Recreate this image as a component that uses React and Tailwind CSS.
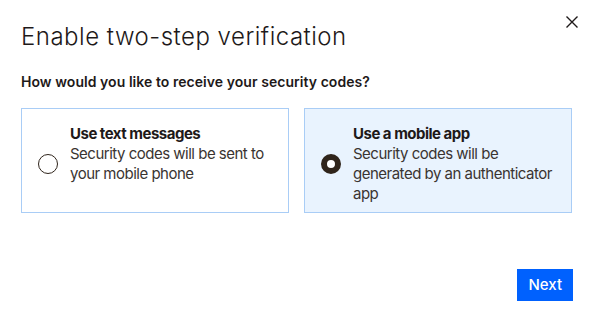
import React, { useState } from 'react';

const options = [
  { id: 'sms', title: 'Use text messages', desc: 'Security codes will be sent to your mobile phone' },
  { id: 'app', title: 'Use a mobile app', desc: 'Security codes will be generated by an authenticator app' },
];

export default function App() {
  const [choice, setChoice] = useState('app');

  return (
    <div className="w-[594px] h-[322px] bg-white relative text-[#1e1919]" style={{ fontFamily: 'Inter, "Liberation Sans", sans-serif' }}>
      <button className="absolute right-[15px] top-[15px] w-[14px] h-[14px] text-[#1e1919]" aria-label="Close">
        <svg viewBox="0 0 14 14" width="14" height="14" fill="none" stroke="currentColor" strokeWidth="1.4">
          <path d="M1.5 1.5l11 11M12.5 1.5l-11 11" />
        </svg>
      </button>

      <div className="px-[21px] pt-[22px]">
        <h1 className="text-[24px] font-light leading-[30px] tracking-[0.5px]">Enable two-step verification</h1>
        <p className="mt-[20px] text-[14px] font-semibold leading-[20px] tracking-[0.05px]">How would you like to receive your security codes?</p>

        <div className="mt-[16px] flex gap-[15px]">
          {options.map((o) => {
            const on = choice === o.id;
            return (
              <button
                key={o.id}
                onClick={() => setChoice(o.id)}
                className={`w-[268px] flex items-center text-left border pl-[16px] pr-[12px] pt-[15px] pb-[8px] ${on ? 'bg-[#e9f3fe] border-[#a9cdf6]' : 'bg-white border-[#a9cdf6]'}`}
              >
                <span className={`w-[20px] h-[20px] shrink-0 rounded-full ${on ? 'border-[6px] border-[#2f241b] bg-white' : 'border-[1.5px] border-[#2f241b]'}`} />
                <span className="ml-[12px] self-start text-[15px] leading-[20px] tracking-[-0.5px]">
                  <span className="block font-bold">{o.title}</span>
                  <span className="block text-[#3a3431]">{o.desc}</span>
                </span>
              </button>
            );
          })}
        </div>

        <div className="flex justify-end mt-[56px]">
          <button className="h-[32px] px-[11px] bg-[#0061fe] text-white text-[15px] font-medium">Next</button>
        </div>
      </div>
    </div>
  );
}
